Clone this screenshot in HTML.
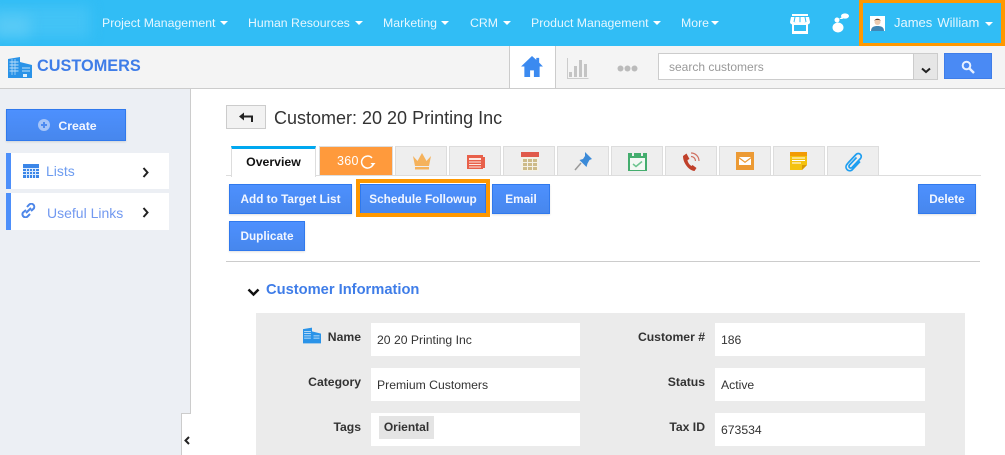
<!DOCTYPE html>
<html><head><meta charset="utf-8"><style>
*{box-sizing:border-box}
html,body{margin:0;padding:0;width:1005px;height:455px;overflow:hidden;background:#fff;font-family:"Liberation Sans",sans-serif}
.a{position:absolute}
.n{position:absolute;top:15px;font-size:12.3px;line-height:16px;color:#e6f7ff;white-space:nowrap}
.car{position:absolute;width:0;height:0;border-left:4.500px solid transparent;border-right:4.500px solid transparent;border-top:4.500px solid #fff}
.btn{position:absolute;height:30px;background:linear-gradient(#4d90fe,#4787ed);border:1px solid #3079ed;color:#f2f6ff;font-weight:bold;font-size:11.800px;line-height:28px;text-align:center;box-shadow:0 1px 2px rgba(0,0,0,.12);white-space:nowrap}
.tab{position:absolute;top:146px;width:52px;height:29px;background:#eee;border:1px solid #ddd;border-bottom:0}
.tab svg{position:absolute;left:16px;top:5px}
.lab{position:absolute;width:120px;text-align:right;font-weight:bold;font-size:12.200px;color:#333;line-height:16px}
.fld{position:absolute;height:33px;background:#fff;font-size:12.200px;color:#333;line-height:16px;padding:9px 0 0 6px}
</style></head><body>
<div class="a" style="left:0;top:0;width:1005px;height:46px;background:#31bdf5"></div>
<div class="a" style="left:-10px;top:6px;width:100px;height:32px;background:#42c3f6;filter:blur(6px)"></div>
<div class="a" style="left:-5px;top:16px;width:35px;height:20px;background:#58caf6;filter:blur(6px)"></div>
<div class="n" style="left:102px">Project Management</div><div class="car" style="left:220px;top:21px"></div>
<div class="n" style="left:248px">Human Resources</div><div class="car" style="left:355px;top:21px"></div>
<div class="n" style="left:383px">Marketing</div><div class="car" style="left:441px;top:21px"></div>
<div class="n" style="left:470px">CRM</div><div class="car" style="left:503px;top:21px"></div>
<div class="n" style="left:531px">Product Management</div><div class="car" style="left:653px;top:21px"></div>
<div class="n" style="left:681px">More</div><div class="car" style="left:711px;top:21px"></div>
<svg class="a" style="left:790px;top:13px" width="20" height="21" viewBox="0 0 20 21"><path d="M2 1h16v2H2zM1 4h18l1 5H0z" fill="#fff"/><path d="M2 10h16v11H2z" fill="#fff"/><path d="M4 12h12v6H4z" fill="#31bdf5"/><path d="M0 9a2.500 2.500 0 0 0 5 0 2.500 2.500 0 0 0 5 0 2.500 2.500 0 0 0 5 0 2.500 2.500 0 0 0 5 0z" fill="#fff"/><path d="M5 4l-1 5M10 4v5M15 4l1 5" stroke="#31bdf5"/></svg>
<svg class="a" style="left:832px;top:13px" width="17" height="20" viewBox="0 0 17 20"><ellipse cx="6" cy="14.500" rx="5.500" ry="5" fill="#fff"/><circle cx="5" cy="7" r="2.500" fill="#fff"/><ellipse cx="13" cy="3" rx="4" ry="2.600" fill="#fff"/><path d="M7 6l3-2 1 2z" fill="#fff"/></svg>
<svg class="a" style="left:870px;top:16px" width="15" height="15" viewBox="0 0 15 15"><rect width="15" height="15" fill="#fff"/><path d="M1 15c0-4 3-5 6.500-5s6.500 1 6.500 5z" fill="#3f86b5"/><circle cx="7.500" cy="6" r="3" fill="#eccbb0"/><path d="M4.500 5c0-3 6-3 6 0l-1-1h-4z" fill="#5a3a2a"/></svg>
<div class="n" style="left:894px;font-size:13px;word-spacing:1.500px">James William</div><div class="car" style="left:985px;top:22px"></div>
<div class="a" style="left:859px;top:0;width:146px;height:48px;border:solid #ff9800;border-width:3px 4px 5px 4px"></div>

<div class="a" style="left:0;top:46px;width:1005px;height:43px;background:#f4f4f4;border-bottom:1px solid #ccc"></div>
<svg class="a" style="left:8px;top:57px" width="24" height="21" viewBox="0 0 24 21" fill="#2a93e8"><path d="M0 2l12-2v5l12 3v13H0z"/><path d="M1.500 5h9M1.500 8h9M1.500 11h9M1.500 14h9M14 11h8M14 14h8" stroke="#bfe0f9" stroke-width="1"/><path d="M4 2v16M7 2v16" stroke="#bfe0f9" stroke-width=".7"/><rect x="15" y="17" width="4" height="3" fill="#dff0fc"/></svg>
<div class="a" style="left:37px;top:57px;font-size:16.300px;line-height:19px;font-weight:bold;color:#3f7de8">CUSTOMERS</div>
<div class="a" style="left:509px;top:46px;width:47px;height:42px;background:#fff;border:solid #ccc;border-width:0 1px"></div>
<svg class="a" style="left:521px;top:56px" width="22" height="21" viewBox="0 0 23 22"><path d="M11.500 0L0 11h3.500v11h6v-7h4v7h6V11H23l-4-4V2h-3v2z" fill="#3b8af0"/></svg>
<svg class="a" style="left:567px;top:58px" width="22" height="21" viewBox="0 0 22 21"><path d="M.5 0v20.500H21.500" fill="none" stroke="#ccc"/><path d="M2 14h3v5H2zM7 8h3v11H7zM12 2h3v17h-3zM17 6h3v13h-3z" fill="#c4c4c4"/></svg>
<svg class="a" style="left:617px;top:65px" width="21" height="7"><circle cx="3.500" cy="3.500" r="3" fill="#bbb"/><circle cx="10.500" cy="3.500" r="3" fill="#bbb"/><circle cx="17.500" cy="3.500" r="3" fill="#bbb"/></svg>
<div class="a" style="left:658px;top:53px;width:280px;height:27px;background:#fff;border:1px solid #ccc;font-size:12px;line-height:26px;color:#999;padding-left:10px">search customers</div>
<div class="a" style="left:913px;top:53px;width:25px;height:27px;background:#e6e6e6;border:1px solid #ccc"></div>
<svg class="a" style="left:921px;top:67px" width="10" height="7"><path d="M1 1.500l4 3.500 4-3.500" fill="none" stroke="#222" stroke-width="2"/></svg>
<div class="a" style="left:944px;top:53px;width:48px;height:26px;background:#4a8af4;border:1px solid #3f7de8"></div>
<svg class="a" style="left:961px;top:60px" width="14" height="14"><circle cx="5.500" cy="5.500" r="3.800" fill="none" stroke="#e6f0ff" stroke-width="2"/><path d="M8.500 8.500l4.500 4.500" stroke="#e6f0ff" stroke-width="2.400"/></svg>

<div class="a" style="left:0;top:89px;width:191px;height:366px;background:#eceff4;border-right:1px solid #ccc"></div>
<div class="btn" style="left:6px;top:109px;width:120px;height:32px;line-height:32px;padding-left:23px;font-size:12.300px">Create</div>
<svg class="a" style="left:38px;top:119px" width="12" height="12"><circle cx="6" cy="6" r="6" fill="#a5c4f8"/><path d="M6 3v6M3 6h6" stroke="#4d8af0" stroke-width="2"/></svg>
<div class="a" style="left:6px;top:153px;width:163px;height:36px;background:#fff;border-left:5px solid #4d8ffa"></div>
<div class="a" style="left:6px;top:193px;width:163px;height:37px;background:#fff;border-left:5px solid #4d8ffa"></div>
<svg class="a" style="left:23px;top:164px" width="16" height="14"><rect width="16" height="14" fill="#3b86e8"/><path d="M0 4.500h16M0 7.500h16M0 10.500h16M3.500 4v10M6.500 4v10M9.500 4v10M12.500 4v10" stroke="#dcebfd" stroke-width="1"/></svg>
<div class="a" style="left:46px;top:163px;font-size:14px;line-height:17px;color:#6d9cf0">Lists</div>
<svg class="a" style="left:21px;top:203px" width="15" height="15" viewBox="0 0 15 15" fill="none" stroke="#4d86e8" stroke-width="2"><path d="M6 4l2-2.200a2.500 2.500 0 0 1 4.500 4L10 8M9 11l-2 2a2.500 2.500 0 0 1-5-3.500L5 7M5 10l5-5"/></svg>
<div class="a" style="left:47px;top:205px;font-size:14px;line-height:17px;color:#7299f0">Useful Links</div>
<svg class="a" style="left:142px;top:167px" width="8" height="11"><path d="M1.500 1l4 4.500-4 4.500" fill="none" stroke="#222" stroke-width="2"/></svg>
<svg class="a" style="left:142px;top:207px" width="8" height="11"><path d="M1.500 1l4 4.500-4 4.500" fill="none" stroke="#222" stroke-width="2"/></svg>
<div class="a" style="left:181px;top:413px;width:10px;height:42px;background:#fff;border:solid #ccc;border-width:1px 0 0 1px"></div>
<svg class="a" style="left:184px;top:436px" width="7" height="9"><path d="M5 1L1.500 4.500 5 8" fill="none" stroke="#222" stroke-width="2"/></svg>

<div class="a" style="left:226px;top:105px;width:40px;height:24px;background:#f2f2f2;border:1px solid #ccc"></div>
<svg class="a" style="left:239px;top:112px" width="14" height="10"><path d="M0 4.500L5 .5V3.500H14V10H12V5.500H5V8.500z" fill="#222"/></svg>
<div class="a" style="left:274px;top:108px;font-size:18px;line-height:21px;color:#333;white-space:nowrap">Customer: 20 20 Printing Inc</div>

<div class="a" style="left:226px;top:175px;width:755px;height:1px;background:#ddd"></div>
<div class="a" style="left:231px;top:146px;width:85px;height:31px;background:#fff;border:solid #ddd;border-width:3px 1px 0 1px;border-top-color:#00a8f0;font-weight:bold;font-size:12.300px;line-height:27px;text-align:center;color:#111">Overview</div>
<div class="a" style="left:319px;top:146px;width:74px;height:29px;background:#ff9a3c;border:1px solid #ddd;border-bottom:0;color:#fff;font-size:12.500px;line-height:29px;padding-left:17px;letter-spacing:.3px">360</div>
<svg class="a" style="left:360px;top:154px" width="16" height="16" fill="none" stroke="#fff" stroke-width="1.500"><path d="M12 4A6 6 0 1 0 13.500 9"/><path d="M10.500 9h5l-2.500 3z" fill="#fff" stroke="none"/></svg>
<div class="tab" style="left:395px"><svg width="20" height="20"><path d="M1 4l4.500 5L10 1l4.500 8L19 4l-2 10H3z" fill="#f5b25c"/><rect x="3" y="15" width="14" height="2.500" fill="#f5b25c"/></svg></div>
<div class="tab" style="left:449px"><svg width="20" height="20"><rect x="1" y="3" width="16" height="14" fill="#e8604a"/><rect x="17" y="5" width="2" height="11" fill="#e8604a"/><path d="M3 6h12v2H3zM3 9.500h12v1H3zM3 12h12v1H3zM3 14.500h12v1H3z" fill="#fde8e2"/></svg></div>
<div class="tab" style="left:503px"><svg width="20" height="20"><rect x="1" y="0" width="18" height="19" fill="#f4f1e6"/><rect x="1" y="0" width="18" height="5" fill="#e05a4a"/><path d="M3 7h4v3H3zM8 7h4v3H8zM13 7h4v3h-4zM3 11h4v3H3zM8 11h4v3H8zM13 11h4v3h-4zM3 15h4v3H3zM8 15h4v3H8zM13 15h4v3h-4z" fill="#cdbb88"/></svg></div>
<div class="tab" style="left:557px"><svg width="20" height="20"><path d="M11 0l7 7-2.500 1-2 3.500-1 3.500-7-7 3.500-1 2-3z" fill="#3b8ad8"/><path d="M7 11l-6 7" stroke="#999" stroke-width="1.500"/></svg></div>
<div class="tab" style="left:611px"><svg width="20" height="20"><rect x="0" y="1" width="19" height="18" fill="#44ad6e"/><rect x="2" y="6" width="15" height="12" fill="#f4f8f4"/><path d="M4 0h2v4H4zM13 0h2v4h-2z" fill="#eee"/><path d="M5 12l3 2.500 6-5" fill="none" stroke="#6cc48e" stroke-width="1.500"/></svg></div>
<div class="tab" style="left:665px"><svg width="20" height="20"><path d="M1 4l3.500-2.500 3 5.500-2 1c0 2 2 5 4 6l1-1 4 3-2 3C8 19 1 12 1 4z" fill="#c0402a"/><path d="M9 1a8 8 0 0 1 8 8M9 4.500a4.500 4.500 0 0 1 4.500 4.500" fill="none" stroke="#d07060" stroke-width="1.200"/></svg></div>
<div class="tab" style="left:719px"><svg width="20" height="20"><rect x="0" y="0" width="18" height="18" fill="#ec9a34"/><path d="M3 5h12L9 9.500z" fill="#fff"/><path d="M3 6.500l6 4.500 6-4.500V13H3z" fill="#fff"/></svg></div>
<div class="tab" style="left:773px"><svg width="20" height="20"><path d="M0 0h17v13l-5 5H0z" fill="#f4c20f"/><rect x="0" y="0" width="17" height="4" fill="#f29b05"/><path d="M2 6h13M2 8.500h13M2 11h9" stroke="#fff"/><path d="M12 18v-5h5z" fill="#d89a05"/></svg></div>
<div class="tab" style="left:827px"><svg width="20" height="20" fill="none" stroke="#1e9ef0" stroke-width="1.700"><path d="M4 11L12 2.500a3 3 0 0 1 4.500 4L8 15.500a1.700 1.700 0 0 1-2.500-2.500l7-7.500M4 11l-1.500 2a3.800 3.800 0 0 0 5.500 5l8-8.500"/></svg></div>

<div class="btn" style="left:229px;top:184px;width:123px">Add to Target List</div>
<div class="btn" style="left:360px;top:184px;width:126px">Schedule Followup</div>
<div class="a" style="left:356px;top:179px;width:134px;height:38px;border:4px solid #ff9800"></div>
<div class="btn" style="left:492px;top:184px;width:58px">Email</div>
<div class="btn" style="left:918px;top:184px;width:58px">Delete</div>
<div class="btn" style="left:229px;top:221px;width:76px">Duplicate</div>
<div class="a" style="left:226px;top:261px;width:754px;height:1px;background:#ccc"></div>
<svg class="a" style="left:247px;top:288px" width="13" height="9"><path d="M1.500 1.500l5 5 5-5" fill="none" stroke="#111" stroke-width="2.500"/></svg>
<div class="a" style="left:266px;top:281px;font-size:14.700px;line-height:18px;font-weight:bold;color:#3f7de8">Customer Information</div>

<div class="a" style="left:256px;top:313px;width:709px;height:142px;background:#ebebeb"></div>
<svg class="a" style="left:303px;top:327px" width="18" height="17" viewBox="0 0 24 21" fill="#2a93e8"><path d="M0 2l12-2v5l12 3v13H0z"/><path d="M1.500 5h9M1.500 8h9M1.500 11h9M1.500 14h9M14 11h8M14 14h8" stroke="#dff0fc"/></svg>
<div class="lab" style="left:241px;top:329px">Name</div>
<div class="lab" style="left:241px;top:374px">Category</div>
<div class="lab" style="left:241px;top:419px">Tags</div>
<div class="lab" style="left:585px;top:329px">Customer #</div>
<div class="lab" style="left:585px;top:374px">Status</div>
<div class="lab" style="left:585px;top:419px">Tax ID</div>
<div class="fld" style="left:371px;top:323px;width:209px">20 20 Printing Inc</div>
<div class="fld" style="left:371px;top:368px;width:209px">Premium Customers</div>
<div class="fld" style="left:371px;top:413px;width:209px"></div>
<div class="a" style="left:379px;top:416px;width:55px;height:23px;background:#e4e4e4;font-size:12px;font-weight:bold;line-height:23px;color:#333;text-align:center">Oriental</div>
<div class="fld" style="left:715px;top:323px;width:210px">186</div>
<div class="fld" style="left:715px;top:368px;width:210px">Active</div>
<div class="fld" style="left:715px;top:413px;width:210px">673534</div>
</body></html>
